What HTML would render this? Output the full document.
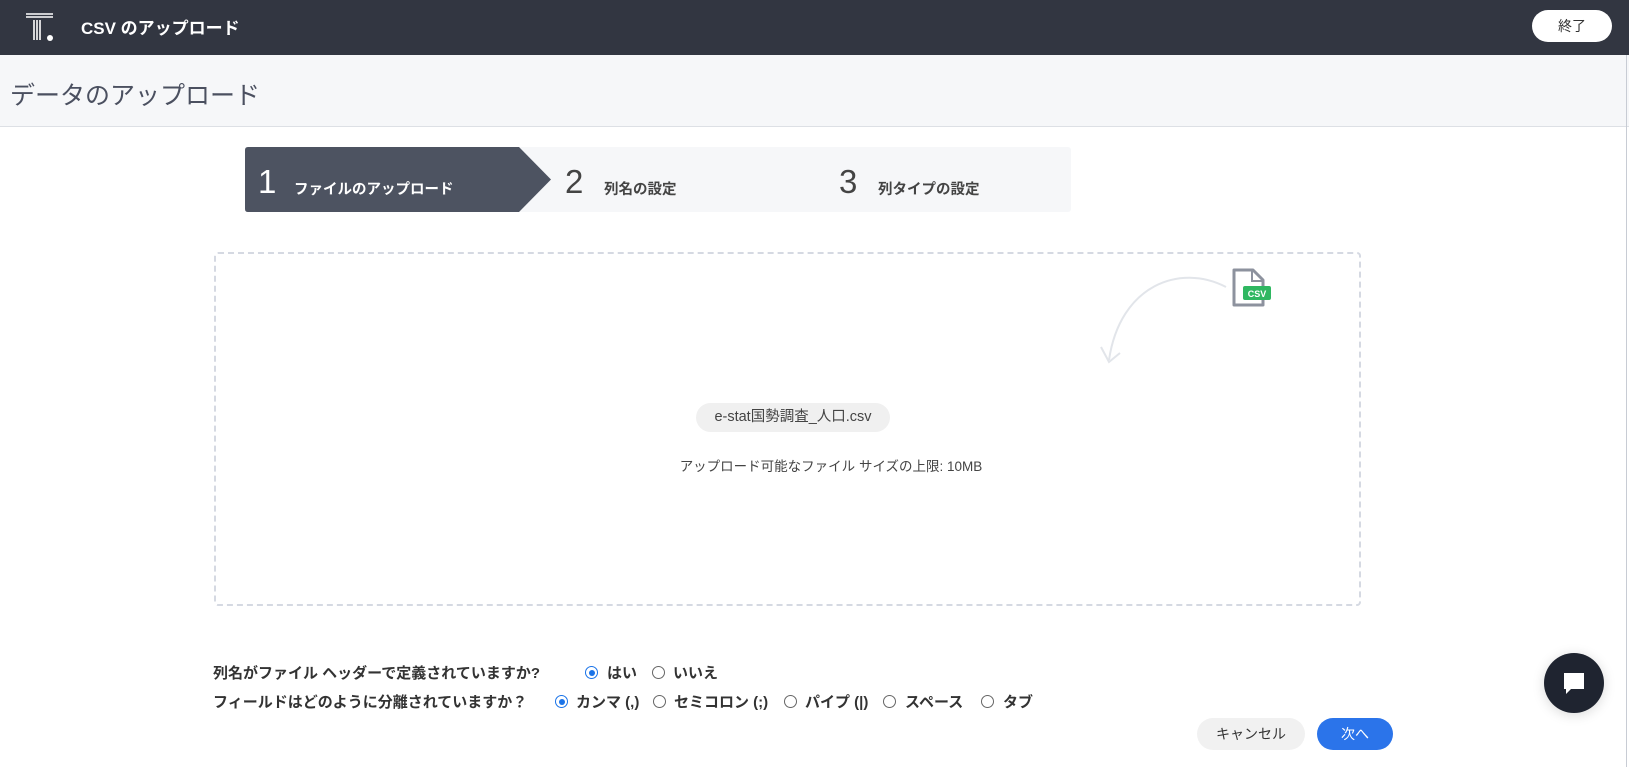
<!DOCTYPE html>
<html><head><meta charset="utf-8"><style>
*{margin:0;padding:0;box-sizing:border-box}
body{width:1629px;height:767px;overflow:hidden;background:#fff;font-family:"Liberation Sans","Noto Sans CJK JP",sans-serif;position:relative;color:#333}
.a{position:absolute;white-space:nowrap}
.hdr{left:0;top:0;width:1629px;height:55px;background:#323641}
.sub{left:0;top:55px;width:1629px;height:72px;background:#f6f7f9;border-bottom:1px solid #dde0e5}
.radio{position:absolute;width:13px;height:13px;border-radius:50%;border:1px solid #666;background:#fff}
.radio.on{border:1px solid #1a73e8}
.radio.on::after{content:"";position:absolute;left:2.5px;top:2.5px;width:6px;height:6px;border-radius:50%;background:#1a73e8}
.q{font-size:15px;font-weight:bold;color:#333}
</style></head><body>
<div class="a hdr"></div>
<svg class="a" style="left:25px;top:12px" width="30" height="30" viewBox="0 0 30 30">
<g stroke="#fff" stroke-width="1.6" fill="none"><line x1="1" y1="2" x2="28" y2="2"/><line x1="1" y1="5" x2="28" y2="5"/><line x1="9" y1="8" x2="9" y2="28"/><line x1="12" y1="8" x2="12" y2="28"/><line x1="15" y1="8" x2="15" y2="28"/></g>
<circle cx="25" cy="26" r="3" fill="#fff"/></svg>
<div class="a" style="left:81px;top:14px;font-size:17px;font-weight:bold;color:#fff">CSV のアップロード</div>
<div class="a" style="left:1532px;top:10px;width:80px;height:32px;border-radius:16px;background:#fff;font-size:14px;color:#333;text-align:center;line-height:32px">終了</div>
<div class="a sub"></div>
<div class="a" style="left:10px;top:76px;font-size:25px;color:#4b5060">データのアップロード</div>
<svg class="a" style="left:245px;top:147px" width="826" height="65"><rect x="0" y="0" width="826" height="65" rx="3" fill="#f6f7f9"/><path d="M3 0H274L306 32.5L274 65H3Q0 65 0 62V3Q0 0 3 0Z" fill="#4d5361"/></svg>
<div class="a" style="left:258px;top:163px;font-size:33px;color:#fff;font-weight:300">1</div>
<div class="a" style="left:294px;top:178px;font-size:14.5px;font-weight:bold;color:#fff">ファイルのアップロード</div>
<div class="a" style="left:565px;top:163px;font-size:33px;color:#444">2</div>
<div class="a" style="left:604px;top:178px;font-size:14.5px;font-weight:bold;color:#444">列名の設定</div>
<div class="a" style="left:839px;top:163px;font-size:33px;color:#444">3</div>
<div class="a" style="left:878px;top:178px;font-size:14.5px;font-weight:bold;color:#444">列タイプの設定</div>
<div class="a" style="left:214px;top:252px;width:1147px;height:354px;border:2px dashed #d5d9e2;border-radius:4px"></div>
<svg class="a" style="left:1090px;top:265px" width="190" height="110"><path d="M136 22C90 -2 30 20 19 95" stroke="#e2e5ea" stroke-width="2" fill="none"/><path d="M11 82L19 97L30 88" stroke="#e2e5ea" stroke-width="2" fill="none"/>
<path d="M144 5H163L173 15V40H144Z" fill="#fff" stroke="#8d929e" stroke-width="3" stroke-linejoin="round"/><path d="M162 5V16H173" stroke="#8d929e" stroke-width="2" fill="none"/>
<rect x="153" y="21" width="28" height="14" rx="2" fill="#2fb761"/><text x="167" y="32" font-size="9" font-weight="bold" fill="#fff" text-anchor="middle" font-family="Liberation Sans,sans-serif">CSV</text></svg>
<div class="a" style="left:696px;top:403px;width:194px;height:29px;border-radius:15px;background:#f0f0f0;font-size:14.5px;color:#444;text-align:center;line-height:29px">e-stat国勢調査_人口.csv</div>
<div class="a" style="left:631px;top:455px;width:400px;text-align:center;font-size:13.5px;color:#444">アップロード可能なファイル サイズの上限: 10MB</div>
<div class="a q" style="left:213px;top:662px">列名がファイル ヘッダーで定義されていますか?</div>
<div class="radio on" style="left:585px;top:666px"></div><div class="a q" style="left:607px;top:662px">はい</div>
<div class="radio" style="left:652px;top:666px"></div><div class="a q" style="left:673px;top:662px">いいえ</div>
<div class="a q" style="left:213px;top:691px">フィールドはどのように分離されていますか？</div>
<div class="radio on" style="left:555px;top:695px"></div><div class="a q" style="left:576px;top:691px">カンマ (,)</div>
<div class="radio" style="left:653px;top:695px"></div><div class="a q" style="left:674px;top:691px">セミコロン (;)</div>
<div class="radio" style="left:784px;top:695px"></div><div class="a q" style="left:805px;top:691px">パイプ (|)</div>
<div class="radio" style="left:883px;top:695px"></div><div class="a q" style="left:905px;top:691px">スペース</div>
<div class="radio" style="left:981px;top:695px"></div><div class="a q" style="left:1003px;top:691px">タブ</div>
<div class="a" style="left:1197px;top:718px;width:108px;height:32px;border-radius:16px;background:#f1f1f1;font-size:14px;color:#333;text-align:center;line-height:32px">キャンセル</div>
<div class="a" style="left:1317px;top:718px;width:76px;height:32px;border-radius:16px;background:#2b74ea;font-size:14px;color:#fff;text-align:center;line-height:32px">次へ</div>
<div class="a" style="left:1544px;top:653px;width:60px;height:60px;border-radius:50%;background:#1f2430;box-shadow:0 2px 12px rgba(0,0,0,.15)"></div>
<svg class="a" style="left:1562px;top:672px" width="24" height="24"><path d="M2 1H22V17H9L4 22V17H2Z" fill="#fff"/></svg>
<div class="a" style="left:1626px;top:55px;width:1px;height:712px;background:#c8ccd4"></div>
</body></html>
